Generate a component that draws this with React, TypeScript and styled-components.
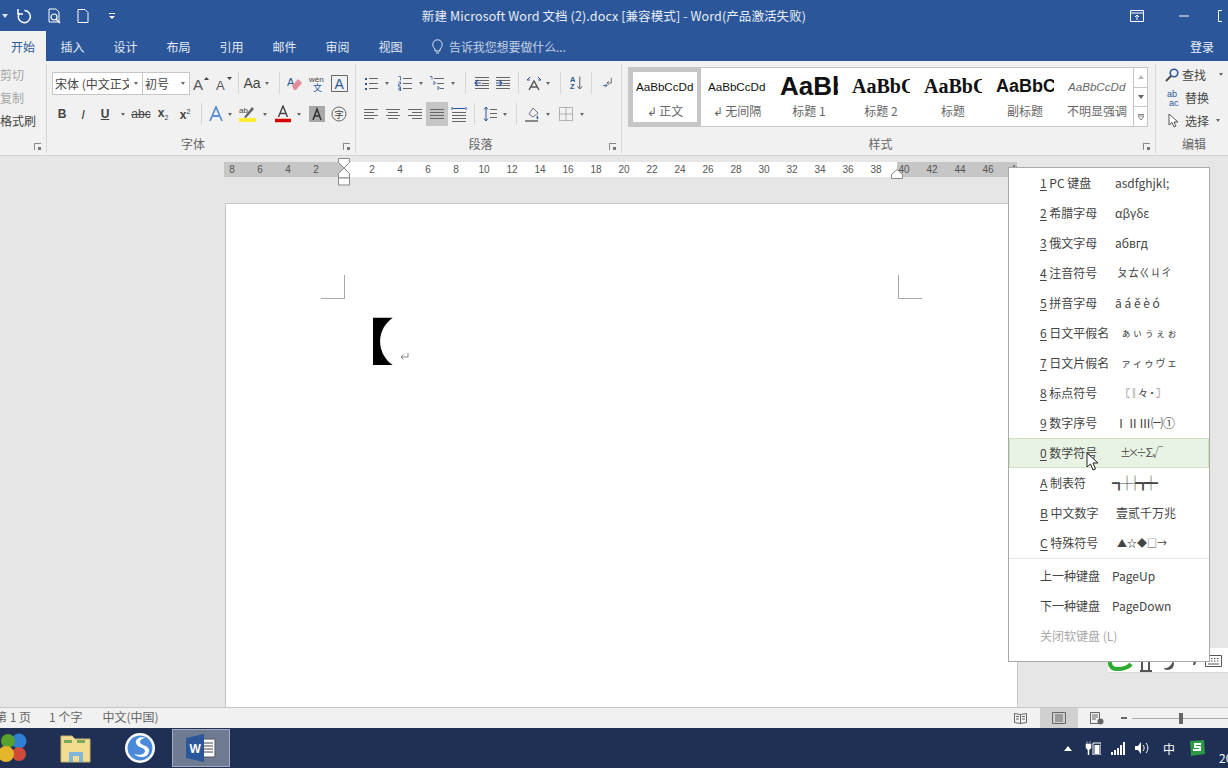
import React from "react";
import styled, { createGlobalStyle } from "styled-components";

const CJK = `"Noto Sans CJK SC", "Noto Sans", sans-serif`;

const GlobalStyle = createGlobalStyle`
  html, body { margin: 0; padding: 0; height: 100%; overflow: hidden; }
  body { font-family: ${CJK}; font-size: 12px; color: #444; }
  #root { height: 100%; }
`;

const Window = styled.div`
  position: relative;
  width: 1228px;
  height: 768px;
  overflow: hidden;
  display: flex;
  flex-direction: column;
  background: #e6e6e6;
`;

/* title bar */
const TitleBar = styled.div`
  height: 31px;
  background: #2b579a;
  color: #e8edf5;
  display: grid;
  grid-template-columns: 1fr auto 1fr;
  align-items: center;
  flex: none;
`;
const Quick = styled.div`
  display: flex;
  align-items: center;
`;
const QuickBtn = styled.span<{ $w: number }>`
  width: ${(p) => p.$w}px;
  display: flex;
  justify-content: center;
  align-items: center;
`;
const DocTitle = styled.div`
  font-size: 12.5px;
  letter-spacing: 0.1px;
  white-space: nowrap;
`;
const WinBtns = styled.div`
  display: flex;
  justify-content: flex-end;
  align-items: center;
  overflow: hidden;
`;
const WinBtn = styled.span<{ $w: number }>`
  width: ${(p) => p.$w}px;
  flex: none;
  display: flex;
  justify-content: center;
`;

/* tabs */
const TabBar = styled.div`
  height: 30px;
  background: #2b579a;
  display: flex;
  align-items: stretch;
  flex: none;
`;
const Tab = styled.div<{ $active?: boolean }>`
  width: ${(p) => (p.$active ? 46 : 53)}px;
  display: flex;
  align-items: center;
  justify-content: center;
  color: ${(p) => (p.$active ? "#2b579a" : "#e4e9f2")};
  background: ${(p) => (p.$active ? "#f1f1f1" : "transparent")};
  font-size: 12px;
`;
const Tell = styled.div`
  display: flex;
  align-items: center;
  gap: 6px;
  margin-left: 15px;
  color: #c3cfe2;
  font-size: 12px;
  letter-spacing: -0.1px;
  flex: 1;
`;
const Login = styled.div`
  color: #eef2f8;
  display: flex;
  align-items: center;
  padding-right: 14px;
`;

/* ribbon */
const Ribbon = styled.div`
  height: 94px;
  background: #f1f1f1;
  border-bottom: 1px solid #d2d2d2;
  display: flex;
  flex: none;
`;
const Group = styled.div<{ $w: number }>`
  position: relative;
  width: ${(p) => p.$w}px;
  box-sizing: border-box;
  flex: none;
  display: flex;
  flex-direction: column;
  border-right: 1px solid #d6d6d6;
  margin: 3px 0 2px;
  &:last-child { border-right: none; }
`;
const GroupBody = styled.div<{ $pad: number }>`
  height: 67px;
  padding: 7px 0 0 ${(p) => p.$pad}px;
  box-sizing: border-box;
  display: flex;
  flex-direction: column;
  gap: 7px;
`;
const GroupLabel = styled.div<{ $flat?: boolean }>`
  height: 22px;
  line-height: 25px;
  text-align: center;
  padding-right: ${(p) => (p.$flat ? 0 : 16)}px;
  color: #666;
  font-size: 12px;
`;
const Launcher = styled.span`
  position: absolute;
  right: 5px;
  bottom: 3px;
  width: 6px;
  height: 6px;
  border-left: 1px solid #888;
  border-top: 1px solid #888;
  &::after {
    content: "";
    display: block;
    width: 3px;
    height: 3px;
    margin: 3px 0 0 3px;
    background: #777;
  }
`;
const ToolRow = styled.div`
  height: 24px;
  display: flex;
  align-items: center;
`;
const Tool = styled.span<{ $w: number; $on?: boolean }>`
  width: ${(p) => p.$w}px;
  height: 24px;
  flex: none;
  display: flex;
  align-items: center;
  justify-content: center;
  color: #444;
  background: ${(p) => (p.$on ? "#c6c6c6" : "transparent")};
`;
const Caret = styled(Tool)`
  &::after {
    content: "";
    border-left: 2.5px solid transparent;
    border-right: 2.5px solid transparent;
    border-top: 3px solid #666;
  }
`;
const Sep = styled.span<{ $l: number; $r: number }>`
  width: 1px;
  height: 22px;
  flex: none;
  background: #d6d6d6;
  margin: 0 ${(p) => p.$r}px 0 ${(p) => p.$l}px;
`;
const Combo = styled.span<{ $w: number }>`
  width: ${(p) => p.$w}px;
  height: 23px;
  box-sizing: border-box;
  flex: none;
  background: #fff;
  border: 1px solid #c6c6c6;
  margin-right: -1px;
  display: flex;
  align-items: center;
  padding: 0 4px 0 2px;
  font-size: 12px;
  color: #444;
  &::after {
    content: "";
    flex: none;
    border-left: 2.5px solid transparent;
    border-right: 2.5px solid transparent;
    border-top: 3px solid #666;
    margin-left: 2px;
  }
`;
const ComboText = styled.span`
  flex: 1;
  min-width: 0;
  overflow: hidden;
  white-space: nowrap;
  margin-right: 3px;
`;
const Glyph = styled.span<{ $size?: number; $color?: string; $bold?: boolean; $italic?: boolean; $under?: boolean; $strike?: boolean }>`
  font-family: "Liberation Sans", sans-serif;
  font-size: ${(p) => p.$size ?? 12}px;
  color: ${(p) => p.$color ?? "#444"};
  font-weight: ${(p) => (p.$bold ? 700 : 400)};
  font-style: ${(p) => (p.$italic ? "italic" : "normal")};
  text-decoration: ${(p) => (p.$under ? "underline" : p.$strike ? "line-through" : "none")};
  line-height: 1;
  sub, sup { font-size: 7px; font-weight: 400; }
`;

/* clipboard and editing */
const SideList = styled.div<{ $pad: number }>`
  padding: 0 0 0 ${(p) => p.$pad}px;
  height: 67px;
  margin-top: -1px;
  margin-bottom: 1px;
  display: flex;
  flex-direction: column;
  overflow: hidden;
`;
const SideItem = styled.div<{ $off?: boolean }>`
  height: 23px;
  flex: none;
  display: flex;
  align-items: center;
  gap: 3px;
  color: ${(p) => (p.$off ? "#a6a6a6" : "#444")};
  white-space: nowrap;
`;
const SideIcon = styled.span`
  width: 17px;
  display: flex;
  justify-content: center;
`;

/* style gallery */
const Gallery = styled.div`
  width: 520px;
  height: 60px;
  margin: 3px 0 4px 6px;
  box-sizing: border-box;
  background: #fff;
  border: 1px solid #c6c6c6;
  display: flex;
`;
const StyleCard = styled.div<{ $on?: boolean }>`
  width: 72px;
  flex: none;
  box-sizing: border-box;
  border: ${(p) => (p.$on ? "4px solid #c6c6c6" : "none")};
  padding: ${(p) => (p.$on ? "0 2px" : "4px 7px")};
  display: flex;
  flex-direction: column;
  align-items: center;
  overflow: hidden;
`;
const Preview = styled.div<{ $size: number; $bold?: boolean; $serif?: boolean; $italic?: boolean; $gray?: boolean }>`
  height: 29px;
  width: 58px;
  flex: none;
  overflow: hidden;
  display: flex;
  align-items: center;
  font-family: ${(p) => (p.$serif ? `"Liberation Serif", serif` : `"Liberation Sans", sans-serif`)};
  font-size: ${(p) => p.$size}px;
  font-weight: ${(p) => (p.$bold ? 700 : 400)};
  font-style: ${(p) => (p.$italic ? "italic" : "normal")};
  color: ${(p) => (p.$gray ? "#666" : "#111")};
  white-space: nowrap;
`;
const StyleName = styled.div`
  height: 20px;
  line-height: 20px;
  color: #666;
  font-size: 12px;
  white-space: nowrap;
`;
const GalleryScroll = styled.div`
  flex: 1;
  display: flex;
  flex-direction: column;
  border-left: 1px solid #c6c6c6;
`;
const ScrollBtn = styled.div`
  flex: 1;
  display: flex;
  align-items: center;
  justify-content: center;
  border-bottom: 1px solid #c6c6c6;
  &:last-child { border-bottom: none; }
`;

/* main area */
const Main = styled.div`
  position: relative;
  flex: 1;
  min-height: 0;
  overflow: hidden;
  display: flex;
  flex-direction: column;
  padding-top: 6px;
`;
const Ruler = styled.div`
  position: relative;
  margin-left: 224px;
  width: 793px;
  height: 15px;
  flex: none;
  display: flex;
  font-size: 10px;
  font-family: "Liberation Sans", sans-serif;
  color: #555;
`;
const RulerPart = styled.div<{ $w: number; $gray?: boolean; $pad?: string; $start?: boolean }>`
  width: ${(p) => p.$w}px;
  flex: none;
  box-sizing: border-box;
  overflow: hidden;
  display: flex;
  justify-content: ${(p) => (p.$gray && !p.$start ? "flex-end" : "flex-start")};
  background: ${(p) => (p.$gray ? "#c6c6c6" : "#fff")};
  padding: ${(p) => p.$pad ?? "0"};
`;
const RulerTick = styled.span`
  width: 28px;
  flex: none;
  text-align: center;
  line-height: 15px;
  &:first-child { margin-left: var(--tick-start, 0); }
`;
const RulerTail = styled(RulerPart)`
  --tick-start: -7px;
`;
const IndentMark = styled.svg<{ $x: number; $y: number }>`
  position: absolute;
  left: ${(p) => p.$x}px;
  top: ${(p) => p.$y}px;
`;
const Page = styled.div`
  flex: 1;
  margin: 26px 0 0 225px;
  width: 793px;
  box-sizing: border-box;
  background: #fff;
  border: 1px solid #c6c6c6;
  border-bottom: none;
  padding: 71px 95px 0;
`;
const Marks = styled.div`
  display: flex;
  justify-content: space-between;
`;
const Mark = styled.span<{ $right?: boolean }>`
  width: 23px;
  height: 23px;
  border-bottom: 1px solid #a8a8a8;
  border-right: ${(p) => (p.$right ? "none" : "1px solid #a8a8a8")};
  border-left: ${(p) => (p.$right ? "1px solid #a8a8a8" : "none")};
`;
const DocLine = styled.div`
  margin: 11px 0 0 51px;
  display: flex;
  align-items: flex-end;
  height: 56px;
`;
const Bracket = styled.span`
  display: inline-block;
  font-family: "Noto Sans CJK SC", sans-serif;
  font-size: 50px;
  line-height: 56px;
  color: #000;
  font-weight: 700;
  margin-left: -32px;
  transform: scaleX(1.25);
  transform-origin: 66% 50%;
`;
const ParaMark = styled.span`
  margin: 0 0 5px 10px;
  display: flex;
`;

/* soft keyboard menu */
const Menu = styled.div`
  position: absolute;
  left: 1008px;
  top: 167px;
  width: 202px;
  height: 495px;
  box-sizing: border-box;
  background: #fff;
  border: 1px solid #a9a9a9;
  z-index: 3;
`;
const MenuRow = styled.div`
  height: 30px;
  box-sizing: border-box;
  display: flex;
  align-items: center;
  padding: 0 0 2px 31px;
  white-space: nowrap;
  font-size: 12px;
  color: #444;
`;
const HotRow = styled(MenuRow)`
  background: #e9f3e4;
  box-shadow: inset 0 0 0 1px #cfe2c6;
`;
const MenuName = styled.span<{ $off?: boolean }>`
  width: 72px;
  flex: none;
  color: ${(p) => (p.$off ? "#a8a8a8" : "#444")};
  u { text-underline-offset: 2px; }
`;
const MenuValue = styled.span<{ $x: number; $size?: number; $track?: number; $bold?: boolean }>`
  margin-left: ${(p) => p.$x}px;
  font-size: ${(p) => p.$size ?? 12}px;
  letter-spacing: ${(p) => p.$track ?? 0}px;
  font-weight: ${(p) => (p.$bold ? 700 : 400)};
  color: #444;
`;
const MenuRule = styled.div`
  height: 1px;
  margin: 0 0 2px;
  background: #e6e6e6;
`;
const ImeBar = styled.div`
  position: absolute;
  left: 1108px;
  top: 492px;
  width: 120px;
  height: 24px;
  background: #fff;
  border-bottom: 1px solid #d8d8d8;
  z-index: 2;
  display: flex;
  align-items: flex-end;
`;
const ImeIcon = styled.span<{ $l: number }>`
  display: flex;
  flex: none;
  margin-left: ${(p) => p.$l}px;
`;
const Pointer = styled.svg`
  position: absolute;
  left: 1086px;
  top: 452px;
  z-index: 4;
`;

/* status and taskbar */
const StatusBar = styled.div`
  height: 21px;
  flex: none;
  background: #f1f1f1;
  border-top: 1px solid #c6c6c6;
  box-sizing: border-box;
  display: flex;
  align-items: center;
  color: #666;
  font-size: 12px;
`;
const StatusText = styled.span<{ $l: number }>`
  margin: 0 0 4px ${(p) => p.$l}px;
  white-space: nowrap;
`;
const ViewBtn = styled.span<{ $w: number; $l?: number; $on?: boolean }>`
  width: ${(p) => p.$w}px;
  margin-left: ${(p) => p.$l ?? 0}px;
  height: 100%;
  flex: none;
  display: flex;
  align-items: center;
  justify-content: center;
  background: ${(p) => (p.$on ? "#d0d0d0" : "transparent")};
`;
const Zoom = styled.div`
  flex: 1;
  position: relative;
  height: 1px;
  margin-left: 5px;
  background: #aaa;
  &::after {
    content: "";
    position: absolute;
    left: 47px;
    top: -5px;
    width: 4px;
    height: 11px;
    background: #666;
  }
`;
const ZoomMinus = styled.span`
  width: 6px;
  height: 2px;
  margin-left: 5px;
  background: #666;
  flex: none;
`;
const TaskBar = styled.div`
  height: 40px;
  flex: none;
  background: #1f3054;
  display: flex;
  align-items: center;
  overflow: hidden;
`;
const TaskBtn = styled.span<{ $w: number; $l: number; $on?: boolean }>`
  width: ${(p) => p.$w}px;
  margin-left: ${(p) => p.$l}px;
  height: 38px;
  box-sizing: border-box;
  flex: none;
  display: flex;
  align-items: center;
  justify-content: center;
  background: ${(p) => (p.$on ? "#6f7a93" : "transparent")};
  border: ${(p) => (p.$on ? "1px solid #a4adbf" : "none")};
`;
const Tray = styled.div`
  margin-left: auto;
  display: flex;
  align-items: center;
  color: #fff;
  width: 170px;
  flex: none;
  white-space: nowrap;
  overflow: hidden;
`;
const TrayItem = styled.span<{ $w: number }>`
  width: ${(p) => p.$w}px;
  flex: none;
  display: flex;
  justify-content: center;
  align-items: center;
`;
const Clock = styled.span`
  margin: 18px 0 0 7px;
  flex: none;
`;

/* drawings */
const Lines = ({ ys, x1 = 1, x2 = 15, color = "#666" }: { ys: number[]; x1?: number; x2?: number; color?: string }) => (
  <>
    {ys.map((y) => (
      <path key={y} d={`M${x1} ${y}H${x2}`} stroke={color} />
    ))}
  </>
);
const Ic = ({ w = 16, h = 16, children }: { w?: number; h?: number; children: React.ReactNode }) => (
  <svg width={w} height={h} viewBox={`0 0 ${w} ${h}`} fill="none">
    {children}
  </svg>
);
const Align = ({ rows }: { rows: [number, number][] }) => (
  <Ic>
    {rows.map(([a, b], i) => (
      <path key={i} d={`M${a} ${3.5 + i * 3}H${b}`} stroke="#666" />
    ))}
  </Ic>
);
const Bullets = () => (
  <Ic>
    <path d="M2 3h2v2H2zM2 8h2v2H2zM2 13h2v2H2z" fill="#2b579a" />
    <Lines ys={[3.5, 8.5, 13.5]} x1={6} x2={15} />
  </Ic>
);
const Numbers = () => (
  <Ic>
    <path d="M1.5 1.5h2v4M1.5 7h2v2h-2v2h2M1.5 12h2v2h-2h2v2h-2" stroke="#2b579a" strokeWidth=".8" />
    <Lines ys={[3.5, 8.5, 13.5]} x1={6} x2={15} />
  </Ic>
);
const Multi = () => (
  <Ic>
    <path d="M1 1.5h2v3M4 7h2v2H4M8 12h2v2H8" stroke="#2b579a" strokeWidth=".8" />
    <path d="M5 3.5H15M8 8.5H15M11 13.5H15" stroke="#666" />
  </Ic>
);
const Indent = ({ out }: { out?: boolean }) => (
  <Ic>
    <Lines ys={[2.5, 5.5, 10.5, 13.5]} />
    <path d="M8 8.5H15" stroke="#666" />
    <path d={out ? "M7 8H1M4 5L1 8l3 3" : "M1 8h6M4 5l3 3-3 3"} stroke="#2b579a" strokeWidth="1.2" />
  </Ic>
);
const Sort = () => (
  <Ic w={14}>
    <text x="0" y="7" fontSize="8" fontWeight="700" fill="#2b579a" fontFamily="Liberation Sans">A</text>
    <text x="0" y="15" fontSize="8" fontWeight="700" fill="#2b579a" fontFamily="Liberation Sans">Z</text>
    <path d="M10.5 1v13M8 11.5l2.5 3 2.5-3" stroke="#555" />
  </Ic>
);
const Direction = () => (
  <Ic>
    <path d="M3 15L8 6l5 9M5 12h6" stroke="#555" strokeWidth="1.4" />
    <path d="M1 5l3-3M1 5h3M15 5l-3-3M15 5h-3" stroke="#2b579a" />
  </Ic>
);
const Pilcrow = () => (
  <Ic w={13}>
    <path d="M11 2v6H6M8 6L6 8l2 2" stroke="#555" />
    <path d="M1 11h5M4 9l2 2-2 2" stroke="#2b579a" />
  </Ic>
);
const Eraser = () => (
  <Ic>
    <text x="0" y="11" fontSize="11" fill="#2b579a" fontFamily="Liberation Sans">A</text>
    <path d="M5 11l6-7 4 4-6 7h-2z" fill="#e78a9a" />
  </Ic>
);
const LineSpace = () => (
  <Ic w={14}>
    <path d="M3 1v14M1 3.5L3 1l2 2.5M1 12.5L3 15l2-2.5" stroke="#2b579a" />
    <Lines ys={[3.5, 7.5, 11.5]} x1={7} x2={14} />
  </Ic>
);
const Bucket = () => (
  <Ic>
    <path d="M5 8l4-6 5 5-5 4z" stroke="#777" fill="#eef2f8" />
    <path d="M1 15h13" stroke="#888" strokeWidth="2" />
    <path d="M13 9c1 2 2 3 1 4s-2-1-1-4z" fill="#2b579a" />
  </Ic>
);
const Borders = () => (
  <Ic>
    <path d="M1.5 1.5h13v13h-13zM8 1.5v13M1.5 8h13" stroke="#777" strokeDasharray="1 1" />
  </Ic>
);
const GrowFont = ({ big, down }: { big?: boolean; down?: boolean }) => (
  <Ic w={18} h={18}>
    <text x="1" y="16" fontSize={big ? 15 : 13} fill="#555" fontFamily="Liberation Sans">A</text>
    <path d={down ? "M12 3h5l-2.5 3z" : "M12 6h5l-2.5-3z"} fill="#444" />
  </Ic>
);

const rows: { k: string; name: string; value: string; x: number; size?: number; track?: number; bold?: boolean }[] = [
  { k: "1", name: " PC 键盘", value: "asdfghjkl;", x: 3 },
  { k: "2", name: " 希腊字母", value: "αβγδε", x: 3 },
  { k: "3", name: " 俄文字母", value: "абвгд", x: 3 },
  { k: "4", name: " 注音符号", value: "ㄆㄊㄍㄐㄔ", x: 5, size: 11 },
  { k: "5", name: " 拼音字母", value: "ā á ě è ó", x: 3 },
  { k: "6", name: " 日文平假名", value: "ぁぃぅぇぉ", x: 9, size: 10, track: 1.5 },
  { k: "7", name: " 日文片假名", value: "ァィゥヴェ", x: 9, size: 10, track: 1.5 },
  { k: "8", name: " 标点符号", value: "〖‖々·〗", x: 8, size: 10, track: -1 },
  { k: "9", name: " 数字序号", value: "ⅠⅡⅢ㈠①", x: 3, size: 12 },
  { k: "0", name: " 数学符号", value: "±×÷∑√", x: 8, size: 11, track: -3 },
  { k: "A", name: " 制表符", value: "┓┼┝┳┿", x: 0, size: 14, track: -6, bold: true },
  { k: "B", name: " 中文数字", value: "壹贰千万兆", x: 4 },
  { k: "C", name: " 特殊符号", value: "▲☆◆□→", x: 5, size: 10 },
];

const styleCards: { preview: string; name: string; size: number; bold?: boolean; serif?: boolean; italic?: boolean; gray?: boolean }[] = [
  { preview: "AaBbCcDd", name: "↲ 无间隔", size: 11.6 },
  { preview: "AaBbC", name: "标题 1", size: 26, bold: true },
  { preview: "AaBbC", name: "标题 2", size: 20, bold: true, serif: true },
  { preview: "AaBbC", name: "标题", size: 20, bold: true, serif: true },
  { preview: "AaBbC", name: "副标题", size: 18, bold: true },
  { preview: "AaBbCcDd", name: "不明显强调", size: 11.6, italic: true, gray: true },
];

const leftTicks = [8, 6, 4, 2];
const midTicks = Array.from({ length: 19 }, (_, i) => (i + 1) * 2);
const rightTicks = [40, 42, 44, 46, 48];

export default function App() {
  return (
    <Window>
      <GlobalStyle />
      <TitleBar>
        <Quick>
          <QuickBtn $w={10}>
            <Ic w={6} h={4}><path d="M0 0h6L3 4z" fill="#dfe6f1" /></Ic>
          </QuickBtn>
          <QuickBtn $w={28}>
            <Ic>
              <path d="M5 3.5a6 6 0 1 0 6 0" stroke="#fff" strokeWidth="1.5" transform="rotate(-30 8 8)" />
              <path d="M4 1v5h5" stroke="#fff" strokeWidth="1.5" transform="translate(-2 0)" />
            </Ic>
          </QuickBtn>
          <QuickBtn $w={32}>
            <Ic>
              <path d="M3 1h7l3 3v10H3z" stroke="#fff" />
              <circle cx="8" cy="9" r="3" stroke="#fff" strokeWidth="1.2" />
              <path d="M10 11l4 4" stroke="#fff" strokeWidth="1.5" />
            </Ic>
          </QuickBtn>
          <QuickBtn $w={26}>
            <Ic><path d="M3 1.5h7l3 3v10H3z" stroke="#fff" /></Ic>
          </QuickBtn>
          <QuickBtn $w={32}>
            <Ic w={8} h={8}><path d="M1 1.5h6" stroke="#fff" /><path d="M1 4h6L4 7z" fill="#fff" /></Ic>
          </QuickBtn>
        </Quick>
        <DocTitle>新建 Microsoft Word 文档 (2).docx [兼容模式] - Word(产品激活失败)</DocTitle>
        <WinBtns>
          <WinBtn $w={48}>
            <Ic w={14} h={12}>
              <path d="M.5.5h13v11H.5zM.5 3h13M7 10V5M5 7l2-2 2 2" stroke="#fff" />
            </Ic>
          </WinBtn>
          <WinBtn $w={46}>
            <Ic w={10} h={2}><path d="M0 1h10" stroke="#fff" /></Ic>
          </WinBtn>
          <WinBtn $w={21}>
            <Ic w={9} h={12}><path d="M9 .5H5.5v11H9" stroke="#fff" /></Ic>
          </WinBtn>
        </WinBtns>
      </TitleBar>

      <TabBar>
        <Tab $active>开始</Tab>
        <Tab>插入</Tab>
        <Tab>设计</Tab>
        <Tab>布局</Tab>
        <Tab>引用</Tab>
        <Tab>邮件</Tab>
        <Tab>审阅</Tab>
        <Tab>视图</Tab>
        <Tell>
          <Ic w={11} h={15}>
            <path d="M3 10C1 8 .8 6.5 .8 5.5a4.7 4.7 0 0 1 9.4 0c0 1-.2 2.5-2.2 4.5v2H3zM4 14h3" stroke="#e4e9f2" />
          </Ic>
          告诉我您想要做什么...
        </Tell>
        <Login>登录</Login>
      </TabBar>

      <Ribbon>
        <Group $w={47}>
          <SideList $pad={0}>
            <SideItem $off>剪切</SideItem>
            <SideItem $off>复制</SideItem>
            <SideItem>格式刷</SideItem>
          </SideList>
          <GroupLabel />
          <Launcher />
        </Group>

        <Group $w={309}>
          <GroupBody $pad={5}>
            <ToolRow>
              <Combo $w={91}><ComboText>宋体 (中文正文)</ComboText></Combo>
              <Combo $w={48}><ComboText>初号</ComboText></Combo>
              <Tool $w={24}><GrowFont big /></Tool>
              <Tool $w={22}><GrowFont down /></Tool>
              <Sep $l={3} $r={5} />
              <Tool $w={16}><Glyph $size={14}>Aa</Glyph></Tool>
              <Caret $w={14} />
              <Sep $l={5} $r={4} />
              <Tool $w={22}><Eraser /></Tool>
              <Tool $w={22}>
                <Ic w={18} h={18}>
                  <text x="1" y="8" fontSize="8" fill="#444" fontFamily="Liberation Sans">wén</text>
                  <text x="5" y="17" fontSize="9" fill="#2b579a" fontFamily="Noto Sans CJK SC">文</text>
                </Ic>
              </Tool>
              <Tool $w={22}>
                <Ic w={17} h={17}>
                  <path d="M.5.5h16v16H.5z" stroke="#666" />
                  <text x="3.5" y="13.5" fontSize="14" fill="#2b579a" fontFamily="Liberation Sans">A</text>
                </Ic>
              </Tool>
            </ToolRow>
            <ToolRow>
              <Tool $w={20}><Glyph $bold>B</Glyph></Tool>
              <Tool $w={22}><Glyph $italic $size={13}>I</Glyph></Tool>
              <Tool $w={22}><Glyph $bold $under>U</Glyph></Tool>
              <Caret $w={14} />
              <Tool $w={22}><Glyph $strike>abc</Glyph></Tool>
              <Tool $w={22}><Glyph $bold>x<sub>2</sub></Glyph></Tool>
              <Tool $w={22}><Glyph $bold>x<sup>2</sup></Glyph></Tool>
              <Sep $l={5} $r={6} />
              <Tool $w={16}>
                <Ic w={14} h={16}>
                  <path d="M1 15L7 1l6 14M3.5 10h7" stroke="#5b8fd0" strokeWidth="1.8" />
                </Ic>
              </Tool>
              <Caret $w={12} />
              <Tool $w={22}>
                <Ic w={17} h={18}>
                  <text x="0" y="8" fontSize="8" fill="#444" fontFamily="Liberation Sans">ab</text>
                  <path d="M5 12l8-10 2 2-8 9z" fill="#666" />
                  <path d="M0 15h17" stroke="#ffee33" strokeWidth="4" />
                </Ic>
              </Tool>
              <Caret $w={14} />
              <Tool $w={22}>
                <Ic h={18}>
                  <path d="M3.5 12L8 1l4.5 11M5.2 8.5h5.6" stroke="#444" strokeWidth="1.4" />
                  <path d="M0 15.5h16" stroke="#d90000" strokeWidth="3.5" />
                </Ic>
              </Tool>
              <Caret $w={10} />
              <Tool $w={26}>
                <Ic>
                  <path d="M0 0h16v16H0z" fill="#a8a8a8" />
                  <path d="M4 14L8 3l4 11M5.5 10h5" stroke="#333" strokeWidth="1.5" />
                </Ic>
              </Tool>
              <Tool $w={18}>
                <Ic>
                  <circle cx="8" cy="8" r="7" stroke="#666" />
                  <text x="3.5" y="11.5" fontSize="9" fill="#444" fontFamily="Noto Sans CJK SC">字</text>
                </Ic>
              </Tool>
            </ToolRow>
          </GroupBody>
          <GroupLabel>字体</GroupLabel>
          <Launcher />
        </Group>

        <Group $w={266}>
          <GroupBody $pad={4}>
            <ToolRow>
              <Tool $w={22}><Bullets /></Tool>
              <Caret $w={10} />
              <Tool $w={26}><Numbers /></Tool>
              <Caret $w={6} />
              <Tool $w={26}><Multi /></Tool>
              <Caret $w={6} />
              <Sep $l={9} $r={6} />
              <Tool $w={20}><Indent out /></Tool>
              <Tool $w={22}><Indent /></Tool>
              <Sep $l={4} $r={7} />
              <Tool $w={16}><Direction /></Tool>
              <Caret $w={12} />
              <Sep $l={6} $r={9} />
              <Tool $w={13}><Sort /></Tool>
              <Sep $l={8} $r={10} />
              <Tool $w={11}><Pilcrow /></Tool>
            </ToolRow>
            <ToolRow>
              <Tool $w={22}><Align rows={[[1, 15], [1, 11], [1, 15], [1, 11]]} /></Tool>
              <Tool $w={22}><Align rows={[[1, 15], [3, 13], [1, 15], [3, 13]]} /></Tool>
              <Tool $w={22}><Align rows={[[1, 15], [5, 15], [1, 15], [5, 15]]} /></Tool>
              <Tool $w={22} $on><Align rows={[[1, 15], [1, 15], [1, 15], [1, 15]]} /></Tool>
              <Tool $w={22}>
                <Ic>
                  <Lines ys={[6.5, 9.5, 12.5, 15.5]} />
                  <path d="M1 1v3M15 1v3M2 2.5h12" stroke="#2b579a" />
                </Ic>
              </Tool>
              <Sep $l={4} $r={8} />
              <Tool $w={14}><LineSpace /></Tool>
              <Caret $w={16} />
              <Sep $l={3} $r={7} />
              <Tool $w={16}><Bucket /></Tool>
              <Caret $w={16} />
              <Tool $w={20}><Borders /></Tool>
              <Caret $w={12} />
            </ToolRow>
          </GroupBody>
          <GroupLabel>段落</GroupLabel>
          <Launcher />
        </Group>

        <Group $w={534}>
          <Gallery>
            <StyleCard $on>
              <Preview $size={11.6}>AaBbCcDd</Preview>
              <StyleName>↲ 正文</StyleName>
            </StyleCard>
            {styleCards.map((c) => (
              <StyleCard key={c.name}>
                <Preview $size={c.size} $bold={c.bold} $serif={c.serif} $italic={c.italic} $gray={c.gray}>
                  {c.preview}
                </Preview>
                <StyleName>{c.name}</StyleName>
              </StyleCard>
            ))}
            <GalleryScroll>
              <ScrollBtn><Ic w={6} h={4}><path d="M3 0l3 4H0z" fill="#bbb" /></Ic></ScrollBtn>
              <ScrollBtn><Ic w={6} h={4}><path d="M0 0h6L3 4z" fill="#666" /></Ic></ScrollBtn>
              <ScrollBtn><Ic w={6} h={6}><path d="M0 .5h6M0 2h6L3 6z" stroke="#666" strokeWidth=".8" /></Ic></ScrollBtn>
            </GalleryScroll>
          </Gallery>
          <GroupLabel>样式</GroupLabel>
          <Launcher />
        </Group>

        <Group $w={76}>
          <SideList $pad={9}>
            <SideItem>
              <SideIcon>
                <Ic w={14} h={14}>
                  <circle cx="9" cy="5" r="3.8" stroke="#2b579a" strokeWidth="1.6" />
                  <path d="M6 8l-5 5" stroke="#444" strokeWidth="1.8" />
                </Ic>
              </SideIcon>
              查找
              <Caret $w={24} />
            </SideItem>
            <SideItem>
              <SideIcon>
                <Ic w={16} h={18}>
                  <text x="1" y="8" fontSize="9" fill="#2b579a" fontFamily="Liberation Sans">ab</text>
                  <text x="3" y="17" fontSize="9" fill="#2b579a" fontFamily="Liberation Sans">ac</text>
                </Ic>
              </SideIcon>
              替换
            </SideItem>
            <SideItem>
              <SideIcon>
                <Ic w={11} h={15}><path d="M1 1v11l3-2.5 2 4.5 2-1-2-4h4z" stroke="#555" fill="#fff" /></Ic>
              </SideIcon>
              选择
              <Caret $w={12} />
            </SideItem>
          </SideList>
          <GroupLabel $flat>编辑</GroupLabel>
        </Group>
      </Ribbon>

      <Main>
        <Ruler>
          <RulerPart $w={120} $gray $pad="0 14px 0 0">
            {leftTicks.map((n) => <RulerTick key={n}>{n}</RulerTick>)}
          </RulerPart>
          <RulerPart $w={553} $pad="0 0 0 14px">
            {midTicks.map((n) => <RulerTick key={n}>{n}</RulerTick>)}
          </RulerPart>
          <RulerTail $w={120} $gray $start>
            {rightTicks.map((n) => <RulerTick key={n}>{n}</RulerTick>)}
          </RulerTail>
          <IndentMark $x={113} $y={-4} width="14" height="28" viewBox="0 0 14 28" fill="#fff">
            <path d="M1.5.5h11v4L7 10 1.5 4.5z" stroke="#888" />
            <path d="M7 10l5.5 5.5V20h-11v-4.5z" stroke="#888" />
            <path d="M1.5 20h11v7h-11z" stroke="#888" />
          </IndentMark>
          <IndentMark $x={666} $y={7} width="14" height="10" viewBox="0 0 14 10" fill="#fff">
            <path d="M7 .5l5.5 5v4h-11v-4z" stroke="#888" />
          </IndentMark>
        </Ruler>
        <Page>
          <Marks>
            <Mark />
            <Mark $right />
          </Marks>
          <DocLine>
            <Bracket>【</Bracket>
            <ParaMark>
              <Ic w={9} h={8}><path d="M8 0v4H1M3.5 1.5L1 4l2.5 2.5" stroke="#888" /></Ic>
            </ParaMark>
          </DocLine>
        </Page>

        <ImeBar>
          <ImeIcon $l={0}>
            <Ic w={25} h={12}>
              <path d="M2 -2c-1 7 1 11 7 11 6 0 11-1 14-5" stroke="#2eaa2e" strokeWidth="4" />
            </Ic>
          </ImeIcon>
          <ImeIcon $l={7}>
            <Ic w={12} h={12}><path d="M2 0v11M9 0v11M0 11h12" stroke="#555" strokeWidth="2" /></Ic>
          </ImeIcon>
          <ImeIcon $l={11}>
            <Ic w={13} h={12}><path d="M10 0c2 4 1 10-6 10-2 0-3-1-3-2 4 1 8-3 9-8z" fill="#555" /></Ic>
          </ImeIcon>
          <ImeIcon $l={16}>
            <Ic w={6} h={12}><path d="M2 0h3l-2 5H1z" fill="#555" /></Ic>
          </ImeIcon>
          <ImeIcon $l={7}>
            <Ic w={17} h={17}><path d="M.5.5h16v11H.5zM3 3.5h1.5M6 3.5h1.5M9 3.5h1.5M12 3.5h1.5M3 6h1.5M6 6h1.5M9 6h1.5M12 6h1.5M3 9h11" stroke="#555" /></Ic>
          </ImeIcon>
        </ImeBar>
      </Main>

      <Menu>
        {rows.map((r) => {
          const Row = r.k === "0" ? HotRow : MenuRow;
          return (
            <Row key={r.k}>
              <MenuName><u>{r.k}</u>{r.name}</MenuName>
              <MenuValue $x={r.x} $size={r.size} $track={r.track} $bold={r.bold}>{r.value}</MenuValue>
            </Row>
          );
        })}
        <MenuRule />
        <MenuRow>
          <MenuName>上一种键盘</MenuName>
          <MenuValue $x={0}>PageUp</MenuValue>
        </MenuRow>
        <MenuRow>
          <MenuName>下一种键盘</MenuName>
          <MenuValue $x={0}>PageDown</MenuValue>
        </MenuRow>
        <MenuRow>
          <MenuName $off>关闭软键盘 (L)</MenuName>
        </MenuRow>
      </Menu>
      <Pointer width="13" height="20" viewBox="0 0 13 20">
        <path d="M1 1v14l3.5-3 2.5 6 2.5-1-2.5-6h5z" fill="#fff" stroke="#222" />
      </Pointer>

      <StatusBar>
        <StatusText $l={-5}>第 1 页</StatusText>
        <StatusText $l={18}>1 个字</StatusText>
        <StatusText $l={20}>中文(中国)</StatusText>
        <ViewBtn $w={20} $l={852}>
          <Ic w={14} h={12}><path d="M.5 1.5l6 1 6-1v9l-6 1-6-1zM6.5 2.5v9M2 4.5h3M2 7h3M8 4.5h3M8 7h3" stroke="#666" /></Ic>
        </ViewBtn>
        <ViewBtn $w={38} $l={9} $on>
          <Ic w={14} h={12}><path d="M.5.5h13v11H.5zM3 3h8M3 5h8M3 7h8M3 9h8" stroke="#666" /></Ic>
        </ViewBtn>
        <ViewBtn $w={38}>
          <Ic w={14} h={13}><path d="M.5.5h9v11H.5zM2 3h6M2 5h6M2 7h4" stroke="#666" /><circle cx="10.5" cy="9.5" r="3" fill="#666" /></Ic>
        </ViewBtn>
        <ZoomMinus />
        <Zoom />
      </StatusBar>

      <TaskBar>
        <TaskBtn $w={28} $l={0}>
          <Ic w={28} h={34}>
            <circle cx="19" cy="10" r="7.5" fill="#2f7fd6" />
            <circle cx="8" cy="10" r="7" fill="#5aa02c" />
            <circle cx="19" cy="23" r="7" fill="#cf4b3a" />
            <circle cx="6" cy="23" r="8" fill="#e5b52a" />
          </Ic>
        </TaskBtn>
        <TaskBtn $w={34} $l={31}>
          <Ic w={32} h={30}>
            <path d="M1 3h11l3 3h15v23H1z" fill="#f3dc8f" stroke="#cbb46a" />
            <path d="M4 7h8v3H4zM17 7h8v3h-8z" fill="#7aa85c" />
            <path d="M9 29V19h14v10h-4v-6h-6v6z" fill="#7fb6dc" />
          </Ic>
        </TaskBtn>
        <TaskBtn $w={30} $l={32}>
          <Ic w={30} h={30}>
            <circle cx="15" cy="15" r="15" fill="#fff" />
            <circle cx="15" cy="15" r="12.5" fill="#4a8ad8" />
            <path d="M21 5c-6-2-11 1-10 5 1 5 9 4 9 8 0 3-5 5-11 3 4 4 14 5 15-3 1-6-9-5-9-9 0-2 3-4 6-4z" fill="#fff" />
          </Ic>
        </TaskBtn>
        <TaskBtn $w={58} $l={17} $on>
          <Ic w={30} h={28}>
            <path d="M11 5h18v18H11z" fill="#fff" stroke="#555" />
            <path d="M17 9h10M17 12h10M17 15h10M17 18h10" stroke="#444" />
            <path d="M0 4l18-4v28L0 24z" fill="#2b579a" />
            <text x="3.5" y="19" fontSize="12" fontWeight="700" fill="#fff" fontFamily="Liberation Sans">W</text>
          </Ic>
        </TaskBtn>
        <Tray>
          <TrayItem $w={20}><Ic w={8} h={5}><path d="M4 0l4 5H0z" fill="#fff" /></Ic></TrayItem>
          <TrayItem $w={30}>
            <Ic w={16} h={14}>
              <path d="M2 0v3M5 0v3M1 3h5v4L4 9v5H3V9L1 7z" fill="#fff" stroke="#fff" strokeWidth=".5" />
              <path d="M8 2h8v12H8z" stroke="#fff" />
              <path d="M9.5 4h5v9h-5z" fill="#fff" />
            </Ic>
          </TrayItem>
          <TrayItem $w={20}>
            <Ic w={14} h={13}><path d="M0 10h2v3H0zM3 8h2v5H3zM6 6h2v7H6zM9 3h2v10H9zM12 0h2v13h-2z" fill="#fff" /></Ic>
          </TrayItem>
          <TrayItem $w={28}>
            <Ic w={14} h={14}>
              <path d="M0 5h3l3-4v12L3 9H0z" fill="#fff" />
              <path d="M8 4c1.5 2 1.5 4 0 6M11 2c2.5 3 2.5 7 0 10" stroke="#fff" />
            </Ic>
          </TrayItem>
          <TrayItem $w={26}>中</TrayItem>
          <TrayItem $w={30}>
            <Ic w={18} h={18}>
              <path d="M2 2l14-1 1 14-14 2z" fill="#2c9a42" />
              <path d="M13 5H7v3h5v3H5" stroke="#fff" strokeWidth="2" />
            </Ic>
          </TrayItem>
          <Clock>20</Clock>
        </Tray>
      </TaskBar>
    </Window>
  );
}
